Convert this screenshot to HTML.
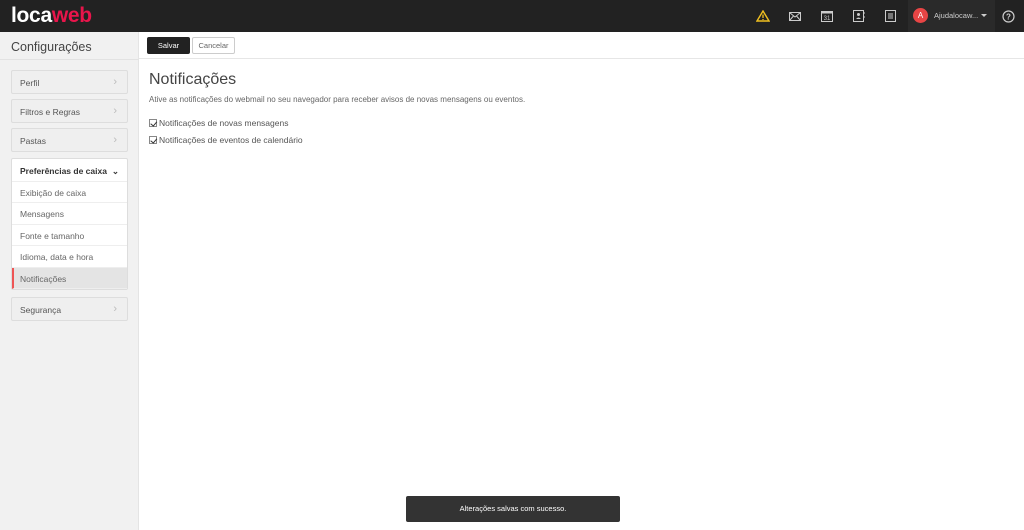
<!DOCTYPE html>
<html><head><meta charset="utf-8"><style>
*{box-sizing:border-box;margin:0;padding:0}
body{width:1024px;height:530px;overflow:hidden;font-family:"Liberation Sans",sans-serif;background:#fff;position:relative;color:#555}
.top{position:absolute;left:0;top:0;width:1024px;height:32px;background:#222}
.logo{position:absolute;left:11px;top:4px;font-size:21px;font-weight:bold;letter-spacing:-0.3px;color:#fff}
.logo span{color:#e8154b}
.ic{position:absolute;top:9px}
.user{position:absolute;left:908px;top:0;width:87px;height:32px;background:#2a2a2a}
.side{position:absolute;left:0;top:32px;width:139px;height:498px;background:#f1f1f1;border-right:1px solid #e4e4e4}
.side h1{font-weight:normal;font-size:12.5px;color:#444;position:absolute;left:11px;top:8px}
.sl{position:absolute;left:0;top:27px;width:139px;border-top:1px solid #e2e2e2}
.box{position:absolute;left:11px;width:117px;height:24px;border:1px solid #ddd;border-radius:2px;background:#efefef;font-size:8.5px;color:#555;padding:7px 0 0 8px}
.box i{position:absolute;right:10px;top:6px;color:#bbb;font-style:normal;font-size:11px;line-height:11px}
.grp{position:absolute;left:11px;top:158px;width:117px;height:132px;border:1px solid #ddd;border-radius:2px;background:#fff}
.grp div{height:21.4px;border-bottom:1px solid #eee;font-size:8.5px;padding:6px 0 0 8px;color:#666}
.grp .h{font-weight:bold;color:#333;height:23px;padding-top:7px}
.grp .a{background:#e4e4e4;border-left:2px solid #e55;padding-left:6px}
.btns{position:absolute;left:139px;top:32px;width:885px;height:27px;border-bottom:1px solid #e6e6e6}
.b1{position:absolute;left:147px;top:37px;width:43px;height:17px;background:#222;color:#fff;font-size:7.5px;text-align:center;line-height:17px;border-radius:2px}
.b2{position:absolute;left:192px;top:37px;width:43px;height:17px;border:1px solid #ccc;color:#666;font-size:7.5px;text-align:center;line-height:15px;border-radius:2px}
h2{position:absolute;left:149px;top:71px;font-weight:normal;font-size:16px;color:#444}
.p{position:absolute;left:149px;top:95px;font-size:8px;color:#666}
.c{position:absolute;left:149px;font-size:8.5px;color:#555}
.c b{display:inline-block;width:8px;height:8px;border:1px solid #888;vertical-align:-1px;margin-right:2px;position:relative}
.c b:after{content:"";position:absolute;left:1.5px;top:0;width:2.5px;height:4.5px;border:solid #333;border-width:0 1.2px 1.2px 0;transform:rotate(40deg)}
.toast{position:absolute;left:406px;top:496px;width:214px;height:26px;background:#333;border-radius:2px;color:#fff;font-size:7.5px;text-align:center;line-height:26px}
</style></head><body>
<div class="top">
<div class="logo">loca<span>web</span></div>
<svg class="ic" style="left:756px;top:10px" width="14" height="12"><path d="M7 1L13 11H1Z" fill="none" stroke="#f0c020" stroke-width="1.4"/><path d="M7 4.5v3.5M7 9v1" stroke="#f0c020" stroke-width="1.3"/></svg>
<svg class="ic" style="left:789px;top:12px" width="12" height="9"><rect x=".5" y=".5" width="11" height="8" fill="none" stroke="#ccc"/><path d="M.5 .5L6 5L11.5 .5M.5 8.5L4.5 4M11.5 8.5L7.5 4" stroke="#ccc" fill="none"/></svg>
<svg class="ic" style="left:821px;top:10px" width="12" height="12"><rect x=".5" y="1.5" width="11" height="10" fill="none" stroke="#ccc"/><rect x=".5" y="1.5" width="11" height="2" fill="#ccc"/><text x="6" y="10" font-size="6" fill="#ccc" text-anchor="middle" font-family="Liberation Sans">31</text></svg>
<svg class="ic" style="left:853px;top:10px" width="12" height="12"><rect x=".5" y=".5" width="10" height="11" fill="none" stroke="#ccc"/><circle cx="5.5" cy="4.5" r="1.5" fill="#ccc"/><path d="M3 9q2.5-3 5 0" fill="#ccc"/><path d="M11 2v2M11 6v2" stroke="#ccc"/></svg>
<svg class="ic" style="left:885px;top:10px" width="11" height="12"><rect x=".5" y=".5" width="10" height="11" fill="none" stroke="#ccc"/><path d="M3 4h5M3 6h5M3 8h5" stroke="#ccc"/></svg>
<div class="user"><div style="position:absolute;left:5px;top:8px;width:15px;height:15px;border-radius:50%;background:#e84545;color:#fff;font-size:8px;text-align:center;line-height:15px">A</div><div style="position:absolute;left:26px;top:11px;font-size:7.5px;color:#ccc">Ajudalocaw...</div><div style="position:absolute;left:73px;top:14px;border:3px solid transparent;border-top-color:#ccc"></div></div>
<svg class="ic" style="left:1002px;top:10px" width="13" height="13"><circle cx="6.5" cy="6.5" r="5.5" fill="none" stroke="#ccc" stroke-width="1.2"/><text x="6.5" y="9.5" font-size="8" fill="#ccc" text-anchor="middle" font-family="Liberation Sans" font-weight="bold">?</text></svg>
</div>
<div class="side"><h1>Configurações</h1><div class="sl"></div></div>
<div class="box" style="top:70px">Perfil<i>›</i></div>
<div class="box" style="top:99px">Filtros e Regras<i>›</i></div>
<div class="box" style="top:128px">Pastas<i>›</i></div>
<div class="grp"><div class="h">Preferências de caixa <span style="float:right;margin-right:8px">⌄</span></div><div>Exibição de caixa</div><div>Mensagens</div><div>Fonte e tamanho</div><div>Idioma, data e hora</div><div class="a">Notificações</div></div>
<div class="box" style="top:297px">Segurança<i>›</i></div>
<div class="btns"></div>
<div class="b1">Salvar</div><div class="b2">Cancelar</div>
<h2>Notificações</h2>
<div class="p">Ative as notificações do webmail no seu navegador para receber avisos de novas mensagens ou eventos.</div>
<div class="c" style="top:118px"><b></b>Notificações de novas mensagens</div>
<div class="c" style="top:135px"><b></b>Notificações de eventos de calendário</div>
<div class="toast">Alterações salvas com sucesso.</div>
</body></html>
